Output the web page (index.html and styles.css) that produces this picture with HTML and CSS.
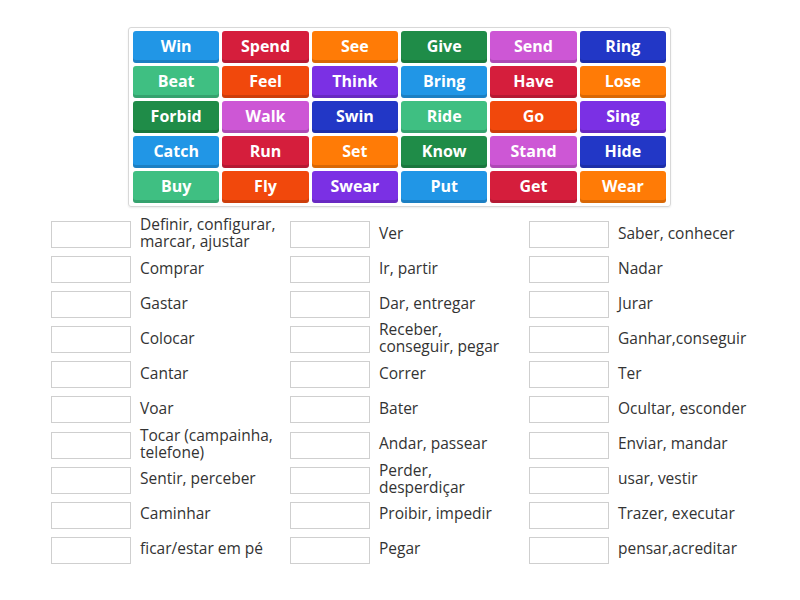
FILE: index.html
```html
<!DOCTYPE html>
<html>
<head>
<meta charset="utf-8">
<link rel="stylesheet" href="styles.css">
</head>
<body>
<div class="bank">
  <div class="tile c1">Win</div><div class="tile c2">Spend</div><div class="tile c3">See</div><div class="tile c4">Give</div><div class="tile c5">Send</div><div class="tile c6">Ring</div>
  <div class="tile c7">Beat</div><div class="tile c8">Feel</div><div class="tile c9">Think</div><div class="tile c1">Bring</div><div class="tile c2">Have</div><div class="tile c3">Lose</div>
  <div class="tile c4">Forbid</div><div class="tile c5">Walk</div><div class="tile c6">Swin</div><div class="tile c7">Ride</div><div class="tile c8">Go</div><div class="tile c9">Sing</div>
  <div class="tile c1">Catch</div><div class="tile c2">Run</div><div class="tile c3">Set</div><div class="tile c4">Know</div><div class="tile c5">Stand</div><div class="tile c6">Hide</div>
  <div class="tile c7">Buy</div><div class="tile c8">Fly</div><div class="tile c9">Swear</div><div class="tile c1">Put</div><div class="tile c2">Get</div><div class="tile c3">Wear</div>
</div>
<div class="lists">
  <div class="col">
    <div class="item"><div class="box"></div><div class="txt">Definir, configurar, marcar, ajustar</div></div>
    <div class="item"><div class="box"></div><div class="txt">Comprar</div></div>
    <div class="item"><div class="box"></div><div class="txt">Gastar</div></div>
    <div class="item"><div class="box"></div><div class="txt">Colocar</div></div>
    <div class="item"><div class="box"></div><div class="txt">Cantar</div></div>
    <div class="item"><div class="box"></div><div class="txt">Voar</div></div>
    <div class="item"><div class="box"></div><div class="txt">Tocar (campainha, telefone)</div></div>
    <div class="item"><div class="box"></div><div class="txt">Sentir, perceber</div></div>
    <div class="item"><div class="box"></div><div class="txt">Caminhar</div></div>
    <div class="item"><div class="box"></div><div class="txt">ficar/estar em pé</div></div>
  </div>
  <div class="col">
    <div class="item"><div class="box"></div><div class="txt">Ver</div></div>
    <div class="item"><div class="box"></div><div class="txt">Ir, partir</div></div>
    <div class="item"><div class="box"></div><div class="txt">Dar, entregar</div></div>
    <div class="item"><div class="box"></div><div class="txt">Receber, conseguir, pegar</div></div>
    <div class="item"><div class="box"></div><div class="txt">Correr</div></div>
    <div class="item"><div class="box"></div><div class="txt">Bater</div></div>
    <div class="item"><div class="box"></div><div class="txt">Andar, passear</div></div>
    <div class="item"><div class="box"></div><div class="txt">Perder, desperdiçar</div></div>
    <div class="item"><div class="box"></div><div class="txt">Proibir, impedir</div></div>
    <div class="item"><div class="box"></div><div class="txt">Pegar</div></div>
  </div>
  <div class="col">
    <div class="item"><div class="box"></div><div class="txt">Saber, conhecer</div></div>
    <div class="item"><div class="box"></div><div class="txt">Nadar</div></div>
    <div class="item"><div class="box"></div><div class="txt">Jurar</div></div>
    <div class="item"><div class="box"></div><div class="txt">Ganhar,conseguir</div></div>
    <div class="item"><div class="box"></div><div class="txt">Ter</div></div>
    <div class="item"><div class="box"></div><div class="txt">Ocultar, esconder</div></div>
    <div class="item"><div class="box"></div><div class="txt">Enviar, mandar</div></div>
    <div class="item"><div class="box"></div><div class="txt">usar, vestir</div></div>
    <div class="item"><div class="box"></div><div class="txt">Trazer, executar</div></div>
    <div class="item"><div class="box"></div><div class="txt">pensar,acreditar</div></div>
  </div>
</div>
</body>
</html>
```

FILE: styles.css
```css
html, body {
  margin: 0;
  padding: 0;
  background: #fff;
}
body {
  font-family: "Open Sans", "DejaVu Sans", sans-serif;
  width: 800px;
  height: 600px;
  overflow: hidden;
}
.bank {
  box-sizing: border-box;
  margin: 27px 0 0 128px;
  width: 543px;
  height: 180px;
  border: 1px solid #d8d8d8;
  border-radius: 3px;
  padding: 3px 4px 3px 4px;
  display: grid;
  grid-template-columns: repeat(6, 1fr);
  grid-template-rows: repeat(5, 1fr);
  gap: 3px 3px;
  box-shadow: 0 1px 2px rgba(0,0,0,0.08);
}
.tile {
  border-radius: 3px;
  color: #fff;
  font-weight: 700;
  font-size: 16px;
  display: flex;
  align-items: center;
  justify-content: center;
  box-shadow: inset 0 -3px 0 rgba(0,0,0,0.15);
  line-height: 1;
  padding-bottom: 2px;
}
.c1 { background: #2196e6; }
.c2 { background: #d51e3c; }
.c3 { background: #ff7b06; }
.c4 { background: #1f8c48; }
.c5 { background: #cd57d5; }
.c6 { background: #2237c6; }
.c7 { background: #3fbf82; }
.c8 { background: #f1480c; }
.c9 { background: #7b30e4; }
.lists {
  display: flex;
  margin: 14px 0 0 51px;
}
.col {
  width: 239px;
  display: flex;
  flex-direction: column;
  gap: 8.1px;
}
.item {
  display: flex;
  align-items: center;
  height: 27px;
}
.box {
  box-sizing: border-box;
  width: 80px;
  height: 27px;
  border: 1px solid #cfcfcf;
  background: #fff;
  flex: none;
}
.txt {
  margin-left: 9px;
  margin-bottom: 3px;
  font-size: 15.5px;
  line-height: 17px;
  color: #333;
  width: 140px;
}
```
